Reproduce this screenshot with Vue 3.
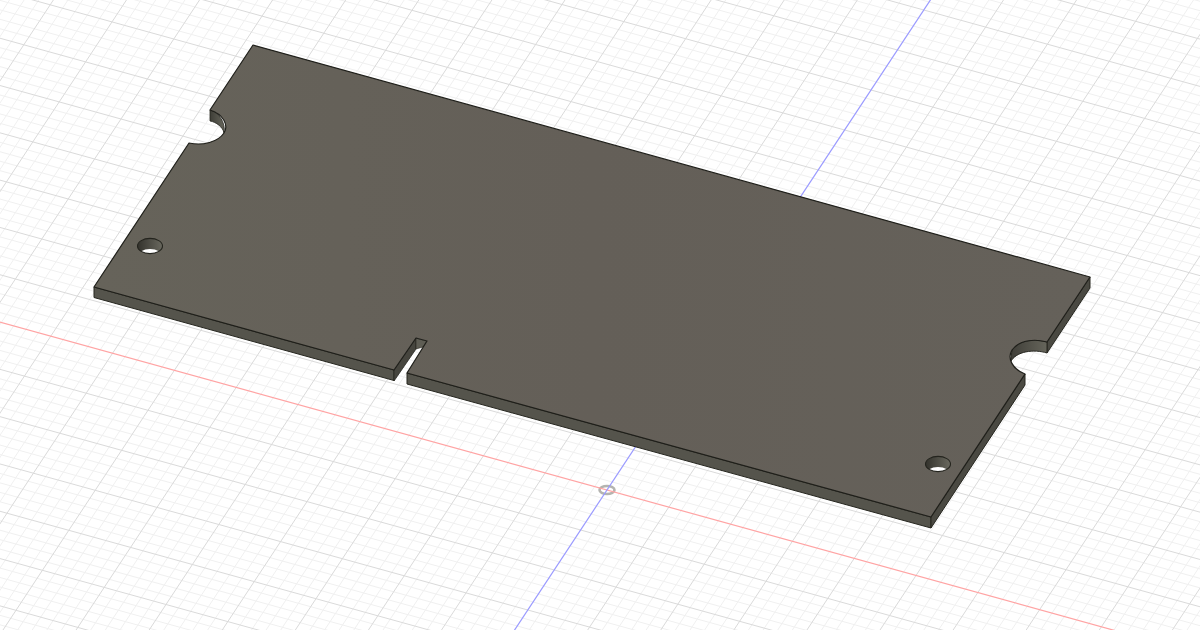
<script setup>
const O = [607, 490]
const EU = [61.8, 17.1]
const EV = [-26.4, 40]
const RANGE = 24
const STEP = 5

function pt(a, b) {
  return [O[0] + a * EU[0] + b * EV[0], O[1] + a * EU[1] + b * EV[1]]
}
function seg(a1, b1, a2, b2) {
  const p = pt(a1, b1)
  const q = pt(a2, b2)
  return { x1: p[0], y1: p[1], x2: q[0], y2: q[1] }
}

const minor = []
const major = []
for (let i = -RANGE * STEP; i <= RANGE * STEP; i++) {
  const t = i / STEP
  const list = i % STEP === 0 ? major : minor
  if (i !== 0) {
    list.push(seg(t, -RANGE, t, RANGE))
    list.push(seg(-RANGE, t, RANGE, t))
  }
}
const redAxis = seg(-RANGE, 0, RANGE, 0)
const blueAxis = seg(0, -RANGE, 0, RANGE)

const topFace =
  'M253,45 L1090,277 L1047,342 C1036,339 1020,339 1012,350 C1007,358 1012,369 1025,374 L931,517 L407,373 L427,341 L416,338 L394,370 L94,287 L189,143 C203,146 218,142 224,133 C229,125 223,114 210,110 Z'
</script>

<template>
  <div class="viewport">
    <svg class="scene" viewBox="0 0 1200 630" width="1200" height="630" xmlns="http://www.w3.org/2000/svg">
      <defs>
        <linearGradient id="faceShade" x1="0" y1="0" x2="1" y2="0">
          <stop offset="0" stop-color="#66635a" />
          <stop offset="0.5" stop-color="#645f58" />
          <stop offset="1" stop-color="#65615a" />
        </linearGradient>
        <linearGradient id="notchShade" x1="0" y1="0" x2="1" y2="0">
          <stop offset="0" stop-color="#3f3e38" />
          <stop offset="1" stop-color="#66655b" />
        </linearGradient>
        <linearGradient id="notchShadeLeft" x1="0" y1="0" x2="1" y2="0">
          <stop offset="0" stop-color="#3e3e37" />
          <stop offset="1" stop-color="#66655b" />
        </linearGradient>
        <linearGradient id="holeShade" x1="0" y1="0" x2="1" y2="0">
          <stop offset="0" stop-color="#33322c" />
          <stop offset="1" stop-color="#6a695f" />
        </linearGradient>
        <clipPath id="holeClipLeft"><ellipse cx="150" cy="246" rx="12.5" ry="7.6" /></clipPath>
        <clipPath id="holeClipRight"><ellipse cx="938" cy="464" rx="12.5" ry="7.6" /></clipPath>
      </defs>

      <g class="grid-minor">
        <line v-for="(l, i) in minor" :key="'n' + i" :x1="l.x1" :y1="l.y1" :x2="l.x2" :y2="l.y2" />
      </g>
      <g class="grid-major">
        <line v-for="(l, i) in major" :key="'m' + i" :x1="l.x1" :y1="l.y1" :x2="l.x2" :y2="l.y2" />
      </g>

      <ellipse class="origin" cx="607" cy="490" rx="7.5" ry="4" />
      <line class="axis-red" :x1="redAxis.x1" :y1="redAxis.y1" :x2="redAxis.x2" :y2="redAxis.y2" />
      <line class="axis-blue" :x1="blueAxis.x1" :y1="blueAxis.y1" :x2="blueAxis.x2" :y2="blueAxis.y2" />

      <g class="walls">
        <polygon class="wall-front" points="94,287 394,370 394,380.5 94,297.5" />
        <polygon class="wall-front" points="407,373 931,517 931,528 407,384" />
        <polygon class="wall-side" points="931,517 1025,374 1025,385 931,528" />
        <polygon class="wall-side" points="1047,342 1090,277 1090,288 1047,353" />
        <polygon class="wall-slot" points="394,370 416,338 416,349 394,381" />
        <polygon class="wall-slot-end" points="416,338 427,341 423,347 416,349" />
        <path class="wall-notch-right" d="M1047,342 C1036,339 1020,339 1012,350 L1010.5,362 C1016,351 1034,349 1047,353 Z" />
        <path class="wall-notch-left" d="M210,110 C218,112 226,122 224,133 C223,127 216,122 210,121 Z" />
      </g>

      <path class="face" :d="topFace" />

      <ellipse class="hole" cx="150" cy="246" rx="12.5" ry="7.6" />
      <ellipse class="hole-through" cx="150" cy="256.6" rx="12.5" ry="7.6" clip-path="url(#holeClipLeft)" />
      <ellipse class="hole-rim" cx="150" cy="246" rx="12.5" ry="7.6" />

      <ellipse class="hole" cx="938" cy="464" rx="12.5" ry="7.6" />
      <ellipse class="hole-through" cx="938" cy="474.6" rx="12.5" ry="7.6" clip-path="url(#holeClipRight)" />
      <ellipse class="hole-rim" cx="938" cy="464" rx="12.5" ry="7.6" />
    </svg>
  </div>
</template>

<style>
html,
body {
  margin: 0;
  background: #ffffff;
}
</style>

<style scoped>
.viewport {
  width: 1200px;
  height: 630px;
  overflow: hidden;
  background: #ffffff;
}
.scene {
  display: block;
}
.grid-minor line {
  stroke: #f0f0f0;
  stroke-width: 1;
}
.grid-major line {
  stroke: #dadada;
  stroke-width: 1;
}
.axis-red {
  stroke: #ffa4a4;
  stroke-width: 1.2;
}
.axis-blue {
  stroke: #9a9aff;
  stroke-width: 1.2;
}
.origin {
  fill: none;
  stroke: #b4b4b0;
  stroke-width: 2.6;
}
.wall-front {
  fill: #55544c;
  stroke: #26261f;
  stroke-width: 1;
  stroke-linejoin: round;
}
.wall-side {
  fill: #4a4942;
  stroke: #26261f;
  stroke-width: 1;
  stroke-linejoin: round;
}
.wall-slot {
  fill: #46453e;
  stroke: #26261f;
  stroke-width: 0.8;
}
.wall-slot-end {
  fill: #5e5d54;
  stroke: #26261f;
  stroke-width: 0.6;
}
.wall-notch-right {
  fill: url(#notchShade);
  stroke: #26261f;
  stroke-width: 1;
}
.wall-notch-left {
  fill: url(#notchShadeLeft);
  stroke: #26261f;
  stroke-width: 0.8;
}
.face {
  fill: url(#faceShade);
  stroke: #1f1f1a;
  stroke-width: 1.2;
  stroke-linejoin: round;
}
.hole {
  fill: url(#holeShade);
}
.hole-through {
  fill: #ffffff;
}
.hole-rim {
  fill: none;
  stroke: #24241e;
  stroke-width: 1.1;
}
</style>
